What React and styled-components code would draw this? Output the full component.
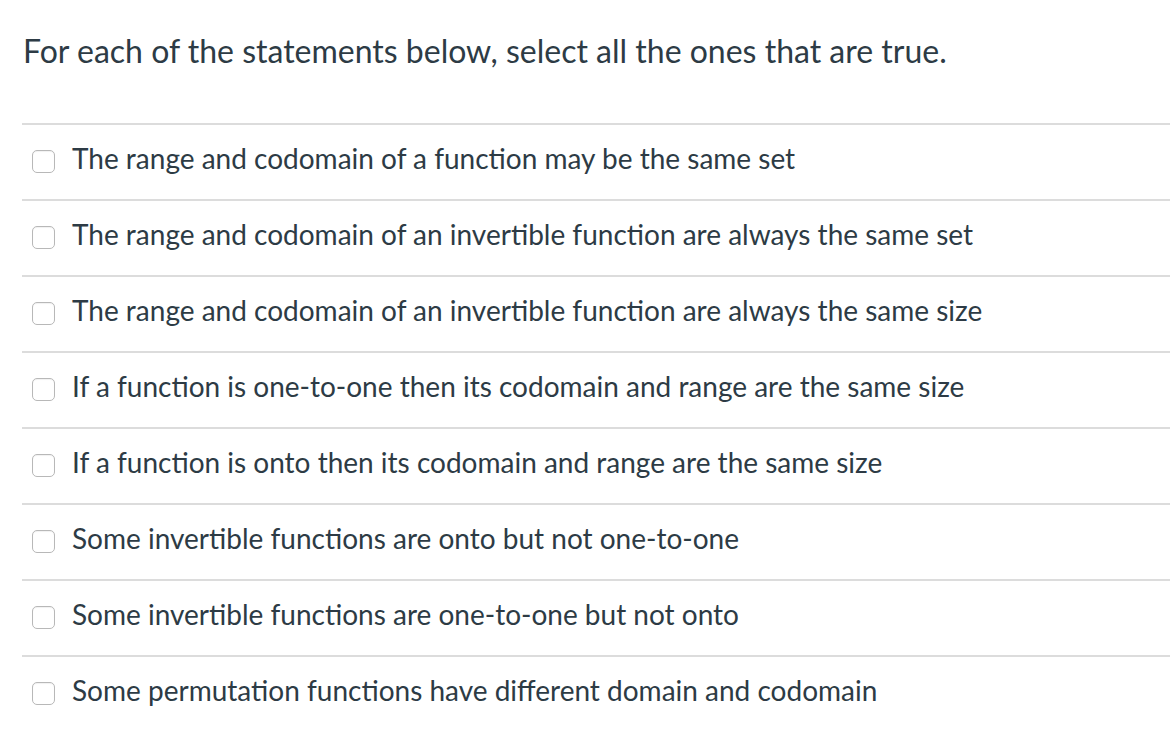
import React from "react";
import styled, { createGlobalStyle } from "styled-components";

const GlobalStyle = createGlobalStyle`
  html, body {
    margin: 0;
    padding: 0;
    background: #ffffff;
  }
  body {
    font-family: Lato, "Liberation Sans", sans-serif;
    color: #2d3b45;
  }
`;

const Wrapper = styled.div`
  width: 1170px;
  padding-left: 22px;
  box-sizing: border-box;
`;

const Question = styled.p`
  margin: 0;
  padding: 31px 0 0 1px;
  height: 123px;
  box-sizing: border-box;
  font-size: 32px;
  line-height: 40px;
  font-weight: 400;
`;

const AnswerList = styled.ul`
  list-style: none;
  margin: 0;
  padding: 0;
`;

const AnswerRow = styled.li`
  display: flex;
  align-items: flex-start;
  gap: 17px;
  height: 76px;
  box-sizing: border-box;
  border-top: 2px solid #dcdcdc;
  padding: 16px 0 0 10px;
`;

const Box = styled.span`
  flex: none;
  width: 23px;
  height: 23px;
  margin-top: 9px;
  box-sizing: border-box;
  border: 1px solid #b8b8b8;
  border-radius: 5px;
  background: #fff;
  box-shadow: inset 0 1px 1px rgba(0, 0, 0, 0.06);
`;

const AnswerText = styled.span`
  font-size: 28px;
  line-height: 34px;
`;

const answers = [
  "The range and codomain of a function may be the same set",
  "The range and codomain of an invertible function are always the same set",
  "The range and codomain of an invertible function are always the same size",
  "If a function is one-to-one then its codomain and range are the same size",
  "If a function is onto then its codomain and range are the same size",
  "Some invertible functions are onto but not one-to-one",
  "Some invertible functions are one-to-one but not onto",
  "Some permutation functions have different domain and codomain",
];

export default function App() {
  return (
    <>
      <GlobalStyle />
      <Wrapper>
        <Question>
          For each of the statements below, select all the ones that are true.
        </Question>
        <AnswerList>
          {answers.map((text) => (
            <AnswerRow key={text}>
              <Box />
              <AnswerText>{text}</AnswerText>
            </AnswerRow>
          ))}
        </AnswerList>
      </Wrapper>
    </>
  );
}
